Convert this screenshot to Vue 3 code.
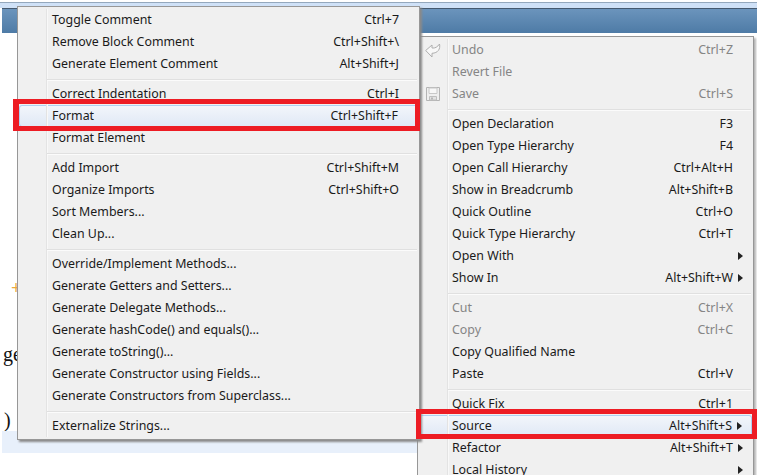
<script setup>
const sourceMenu = [
  [
    { label: 'Toggle Comment', key: 'Ctrl+7' },
    { label: 'Remove Block Comment', key: 'Ctrl+Shift+\\' },
    { label: 'Generate Element Comment', key: 'Alt+Shift+J' },
  ],
  [
    { label: 'Correct Indentation', key: 'Ctrl+I' },
    { label: 'Format', key: 'Ctrl+Shift+F', active: true },
    { label: 'Format Element' },
  ],
  [
    { label: 'Add Import', key: 'Ctrl+Shift+M' },
    { label: 'Organize Imports', key: 'Ctrl+Shift+O' },
    { label: 'Sort Members...' },
    { label: 'Clean Up...' },
  ],
  [
    { label: 'Override/Implement Methods...' },
    { label: 'Generate Getters and Setters...' },
    { label: 'Generate Delegate Methods...' },
    { label: 'Generate hashCode() and equals()...' },
    { label: 'Generate toString()...' },
    { label: 'Generate Constructor using Fields...' },
    { label: 'Generate Constructors from Superclass...' },
  ],
  [{ label: 'Externalize Strings...' }],
]

const contextMenu = [
  [
    { label: 'Undo', key: 'Ctrl+Z', off: true, icon: 'undo' },
    { label: 'Revert File', off: true },
    { label: 'Save', key: 'Ctrl+S', off: true, icon: 'save' },
  ],
  [
    { label: 'Open Declaration', key: 'F3' },
    { label: 'Open Type Hierarchy', key: 'F4' },
    { label: 'Open Call Hierarchy', key: 'Ctrl+Alt+H' },
    { label: 'Show in Breadcrumb', key: 'Alt+Shift+B' },
    { label: 'Quick Outline', key: 'Ctrl+O' },
    { label: 'Quick Type Hierarchy', key: 'Ctrl+T' },
    { label: 'Open With', sub: true },
    { label: 'Show In', key: 'Alt+Shift+W', sub: true },
  ],
  [
    { label: 'Cut', key: 'Ctrl+X', off: true },
    { label: 'Copy', key: 'Ctrl+C', off: true },
    { label: 'Copy Qualified Name' },
    { label: 'Paste', key: 'Ctrl+V' },
  ],
  [
    { label: 'Quick Fix', key: 'Ctrl+1' },
    { label: 'Source', key: 'Alt+Shift+S', sub: true, active: true },
    { label: 'Refactor', key: 'Alt+Shift+T', sub: true },
    { label: 'Local History', sub: true },
  ],
]

const menus = [
  { name: 'source', groups: sourceMenu },
  { name: 'context', groups: contextMenu },
]
</script>

<template>
  <div class="page">
    <div class="top-strip"></div>
    <div class="title-bar"></div>

    <span class="code code-mark">+</span>
    <span class="code code-ge">ge</span>
    <span class="code code-paren">)</span>
    <div class="current-line"></div>

    <div v-for="menu in menus" :key="menu.name" class="menu" :class="menu.name">
      <template v-for="(group, g) in menu.groups" :key="g">
        <div v-if="g > 0" class="sep">
          <div class="gutter"></div>
          <div class="sep-line"></div>
        </div>
        <div v-for="item in group" :key="item.label" class="row" :class="{ off: item.off, active: item.active }">
          <div class="gutter">
            <svg v-if="item.icon === 'undo'" width="16" height="15" viewBox="0 0 16 15">
              <path d="M0.7 7.5 L7 2 V5 C10 5.5 12.5 4 14.5 1 C15.6 6 13 10 7 10.3 V14 Z" fill="#f8f8f8" stroke="#aeaeae" stroke-linejoin="round" />
            </svg>
            <svg v-if="item.icon === 'save'" width="16" height="16" viewBox="0 0 16 16">
              <path d="M1.5 1.5 H14.5 V14.5 H1.5 Z" fill="#efefef" stroke="#b4b4b4" />
              <path d="M4 2 H12 V7.5 H4 Z" fill="#f7f7f7" stroke="#c8c8c8" />
              <path d="M4.5 10.5 H11.5 V14 H4.5 Z" fill="#e2e2e2" stroke="#bebebe" />
              <path d="M6 11.5 H8 V13.5 H6 Z" fill="#b5b5b5" />
            </svg>
          </div>
          <span class="label">{{ item.label }}</span>
          <span v-if="item.key" class="shortcut">{{ item.key }}</span>
          <span class="arrow-cell"><i v-if="item.sub" class="arrow"></i></span>
        </div>
      </template>
    </div>

    <div class="mark mark-format"></div>
    <div class="mark mark-source"></div>
  </div>
</template>

<style scoped>
.page {
  position: relative;
  width: 757px;
  height: 475px;
  overflow: hidden;
  background: #fff;
  font-family: "Noto Sans", "Open Sans", sans-serif;
  font-size: 12.4px;
  color: #1a1a1a;
}

.top-strip {
  height: 6px;
  margin-top: 2px;
  border-top: 1px solid #94a8bd;
  background: #cfe1f7;
  box-sizing: border-box;
}

.title-bar {
  height: 25px;
  margin-left: 2px;
  border-top: 1px solid #45596f;
  background: linear-gradient(#6b94bc, #4e7ba6);
  box-sizing: border-box;
}

.code {
  position: absolute;
  font-family: "Liberation Serif", serif;
  color: #111;
}

.code-mark {
  left: 11px;
  top: 278px;
  font-size: 18px;
  font-weight: bold;
  color: #eba83f;
}

.code-ge {
  left: 3px;
  top: 343px;
  font-size: 20px;
}

.code-paren {
  left: 4px;
  top: 409px;
  font-size: 20px;
}

.current-line {
  position: absolute;
  left: 2px;
  top: 431px;
  width: 416px;
  height: 22px;
  background: #e8f0fb;
}

.menu {
  position: absolute;
  box-sizing: border-box;
  padding: 2px 0;
  border: 1px solid #979797;
  background: #f0f0f0;
  box-shadow: 2px 2px 2px #8a8a8a;
}

.source {
  left: 17px;
  top: 6px;
  width: 403px;
  height: 434px;
  z-index: 2;
}

.context {
  left: 417px;
  top: 36px;
  width: 337px;
  height: 460px;
  z-index: 1;
  box-shadow: 2px 2px 2px #b5b5b5;
}

.row {
  display: flex;
  align-items: center;
  height: 22px;
  white-space: nowrap;
}

.sep {
  display: flex;
  height: 8px;
  align-items: center;
}

.gutter {
  display: flex;
  align-items: center;
  justify-content: center;
  flex: none;
  align-self: stretch;
  width: 28px;
  border-right: 1px solid #e3e3e3;
  box-shadow: 1px 0 0 #f8f8f8;
}

.context .gutter {
  width: 29px;
}

.sep-line {
  flex: 1;
  height: 1px;
  margin-right: 2px;
  background: #e0e0e0;
  box-shadow: 0 1px 0 #fbfbfb;
}

.label {
  flex: 1;
  padding-left: 5px;
  padding-bottom: 1px;
}

.shortcut {
  padding-bottom: 1px;
}

.context .label {
  padding-left: 4px;
}

.arrow-cell {
  display: flex;
  align-items: center;
  flex: none;
  box-sizing: border-box;
  width: 20px;
  padding-left: 5px;
}

.arrow {
  flex: none;
  width: 0;
  height: 0;
  border-left: 5px solid #222;
  border-top: 4px solid transparent;
  border-bottom: 4px solid transparent;
}

.off {
  color: #858585;
}

.active {
  margin: 0 1px 0 1px;
  border-radius: 3px;
  box-shadow: inset 0 0 0 1px #aed0f2;
  background: linear-gradient(#f3f6fb, #dfe8f5);
}

.active .gutter {
  width: 27px;
}

.context .active .gutter {
  width: 28px;
}

.mark {
  position: absolute;
  z-index: 3;
  box-sizing: border-box;
  border: 5px solid #ed1c24;
}

.mark-format {
  left: 13px;
  top: 99px;
  width: 407px;
  height: 32px;
  border-left-width: 6px;
}

.mark-source {
  left: 416px;
  top: 409px;
  width: 341px;
  height: 30px;
}
</style>
